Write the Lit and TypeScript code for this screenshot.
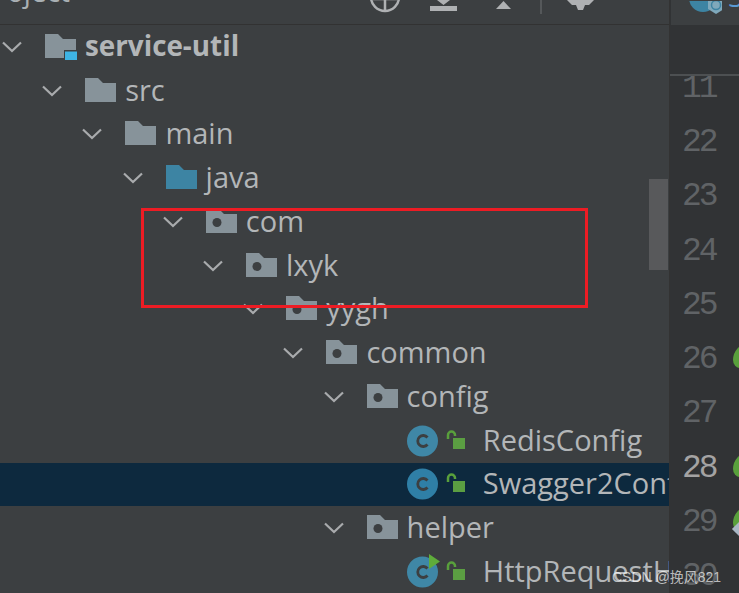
import { LitElement, html, css, svg } from "lit";
import { customElement } from "lit/decorators.js";

type Row = { level: number; name: string; kind: "module" | "folder" | "source" | "package" | "class" | "runnable"; selected?: boolean };

const rows: Row[] = [
  { level: 0, name: "service-util", kind: "module" },
  { level: 1, name: "src", kind: "folder" },
  { level: 2, name: "main", kind: "folder" },
  { level: 3, name: "java", kind: "source" },
  { level: 4, name: "com", kind: "package" },
  { level: 5, name: "lxyk", kind: "package" },
  { level: 6, name: "yygh", kind: "package" },
  { level: 7, name: "common", kind: "package" },
  { level: 8, name: "config", kind: "package" },
  { level: 9, name: "RedisConfig", kind: "class" },
  { level: 9, name: "Swagger2Config", kind: "class", selected: true },
  { level: 8, name: "helper", kind: "package" },
  { level: 9, name: "HttpRequestHelper", kind: "runnable" },
];

const lines = [
  { n: "11" }, { n: "22" }, { n: "23" }, { n: "24" }, { n: "25" },
  { n: "26", leaf: true }, { n: "27" }, { n: "28", active: true, leaf: true }, { n: "29", leaf: true, diamond: true }, { n: "30" },
];

const chevron = html`<svg class="chev" width="20" height="12" viewBox="0 0 20 12"><path d="M1 1.500 L10 10 L19 1.500" fill="none" stroke="#a9abad" stroke-width="2.200"/></svg>`;

function folder(kind: Row["kind"]) {
  const fill = kind === "source" ? "#3d84a3" : "#87939a";
  return html`<svg class="icon" width="32" height="26" viewBox="0 0 32 26">
    <path d="M0 0 H13 L18 5 H31 V24 H0 Z" fill="${fill}"/>
    ${kind === "package" ? svg`<circle cx="11" cy="13.500" r="4.500" fill="#3c3f41"/>` : ""}
    ${kind === "module" ? svg`<rect x="19" y="16" width="14" height="14" fill="#3c3f41"/><rect x="20" y="17.500" width="13" height="13" fill="#3eb4e4"/>` : ""}
  </svg>`;
}

function fileIcon(kind: Row["kind"], selected?: boolean) {
  return html`<svg class="file" width="62" height="36" viewBox="0 0 62 36">
    <circle cx="15.500" cy="18" r="15.500" fill="${selected ? "#2f7fa6" : "#3f87a6"}"/>
    <path d="M20.500 14.500 A5.500 5.500 0 1 0 20.500 21.500" fill="none" stroke="#3c3f41" stroke-width="2.800"/>
    ${kind === "runnable" ? svg`<path d="M22 0 L33 7.500 L22 15 Z" fill="#5fad3b"/>` : ""}
    <path d="M41 16 V12 A3.500 3.500 0 0 1 48 12 V13" fill="none" stroke="#59a03c" stroke-width="2.500"/>
    <rect x="46" y="15" width="12" height="11" fill="#5b9e42"/>
  </svg>`;
}

@customElement("app-root")
export class AppRoot extends LitElement {
  static styles = css`
    :host { display: block; width: 739px; height: 593px; overflow: hidden; position: relative; background: #3c3f41; }
    .shell { display: flex; height: 593px; }
    .panel { width: 669px; flex: none; display: flex; flex-direction: column; overflow: hidden; position: relative; background: #3c3f41; }
    .bar { height: 24px; flex: none; border-bottom: 1px solid #323232; display: flex; align-items: flex-end; overflow: hidden; position: relative; }
    .title { font: 28px "Open Sans", sans-serif; color: #a9b0b4; margin: 0 0 13px 7px; line-height: 40px; flex: none; width: 351px; }
    .tools { display: flex; align-items: flex-end; flex: none; }
    .tree { display: flex; flex-direction: column; }
    .row { height: 43.750px; display: flex; align-items: center; flex: none; white-space: nowrap; font: 29px "Open Sans", sans-serif; color: #b3b6b8; }
    .row.sel { background: #0d293e; }
    .row.bold { font-weight: 700; font-size: 27.800px; }
    .label { margin-bottom: 3px; }
    .chev-box { width: 45px; flex: none; display: flex; padding-left: 2px; box-sizing: border-box; }
    .icon { flex: none; margin-right: 8px; }
    .file { flex: none; margin-left: 45px; margin-right: 14px; }
    .scroll { position: absolute; left: 649px; top: 179px; width: 19px; height: 91px; background: #58595b; }
    .gutter { flex: 1; background: #313335; display: flex; flex-direction: column; min-width: 0; border-left: 1px solid #333; }
    .tab { height: 25px; background: #3c3f41; display: flex; align-items: flex-end; overflow: hidden; flex: none; margin-left: 1px; }
    .tab span { font: 28px "Open Sans", sans-serif; color: #5b9bd5; margin-left: 6px; line-height: 36px; margin-bottom: 11px; }
    .tab svg { flex: none; margin-left: 15px; }
    .rule { height: 49px; flex: none; border-bottom: 2px solid #4d5052; background: #313335; margin-bottom: -15px; position: relative; z-index: 1; }
    .nums { display: flex; flex-direction: column; }
    .num { height: 54.300px; flex: none; display: flex; align-items: center; font: 33px "Liberation Mono", monospace; letter-spacing: -3px; color: #606366; padding-left: 12px; position: relative; }
    .num.active { color: #a4a3a3; }
    .leaf { position: absolute; left: 63px; top: 12px; width: 22px; height: 24px; background: #59a03c; border-radius: 80% 0 80% 40%; }
    .diamond { position: absolute; left: 64px; top: 29px; width: 10px; height: 10px; background: #a9b7c6; transform: rotate(45deg); }
    .mark { position: absolute; left: 141px; top: 208px; width: 447px; height: 100px; border: 3px solid #ed1c24; box-sizing: border-box; pointer-events: none; }
    .wm { position: absolute; left: 612px; top: 566px; font: 14px "Liberation Sans", "Noto Sans CJK SC", sans-serif; color: rgba(255,255,255,.68); white-space: nowrap; }
  `;

  render() {
    return html`<div class="shell">
        <section class="panel">
          <header class="bar">
            <div class="title">oject</div>
            <div class="tools">
              <svg width="280" height="24" viewBox="0 0 280 24">
                <g transform="translate(-358 0)">
                  <circle cx="385" cy="-3" r="14" fill="none" stroke="#afb1b3" stroke-width="2.500"/>
                  <path d="M373 -1 H397 M385 -3 V11" stroke="#afb1b3" stroke-width="2.500"/>
                  <path d="M430 6 H457 V11 H430 Z M437 0 H450 L443.500 5 Z" fill="#afb1b3"/>
                  <path d="M503.500 1 L511 9 H496 Z" fill="#afb1b3"/>
                  <rect x="540" y="0" width="2" height="14" fill="#55585a"/>
                  <path d="M567 0 H594 L589 5 L585 5 L583 10 H578 L576 5 L572 5 Z" fill="#afb1b3"/>
                </g>
              </svg>
            </div>
          </header>
          <div class="tree">
            ${rows.map((r) => {
              const isFile = r.kind === "class" || r.kind === "runnable";
              return html`<div class="row ${r.selected ? "sel" : ""} ${r.kind === "module" ? "bold" : ""}" style="padding-left:${r.level * 40.2}px">
                ${isFile ? fileIcon(r.kind, r.selected) : html`<span class="chev-box">${chevron}</span>${folder(r.kind)}`}
                <span class="label">${r.name}</span>
              </div>`;
            })}
          </div>
          <div class="scroll"></div>
        </section>
        <section class="gutter">
          <div class="tab">
            <svg width="36" height="24" viewBox="0 0 36 24">
              <circle cx="17" cy="-3" r="14" fill="#3d84a3"/>
              <path d="M24 -6 L32 -8 L40 -6 V8 L32 13 L24 8 Z" fill="#7fa8bb" transform="translate(-2 0)"/>
              <circle cx="30" cy="4" r="4.500" fill="none" stroke="#3d84a3" stroke-width="1.500"/>
            </svg>
            <span>S</span>
          </div>
          <div class="rule"></div>
          <div class="nums">
            ${lines.map((l) => html`<div class="num ${l.active ? "active" : ""}">${l.n}${l.leaf ? html`<i class="leaf"></i>` : ""}${l.diamond ? html`<i class="diamond"></i>` : ""}</div>`)}
          </div>
        </section>
      </div>
      <div class="mark"></div>
      <div class="wm">CSDN @挽风821</div>`;
  }
}
